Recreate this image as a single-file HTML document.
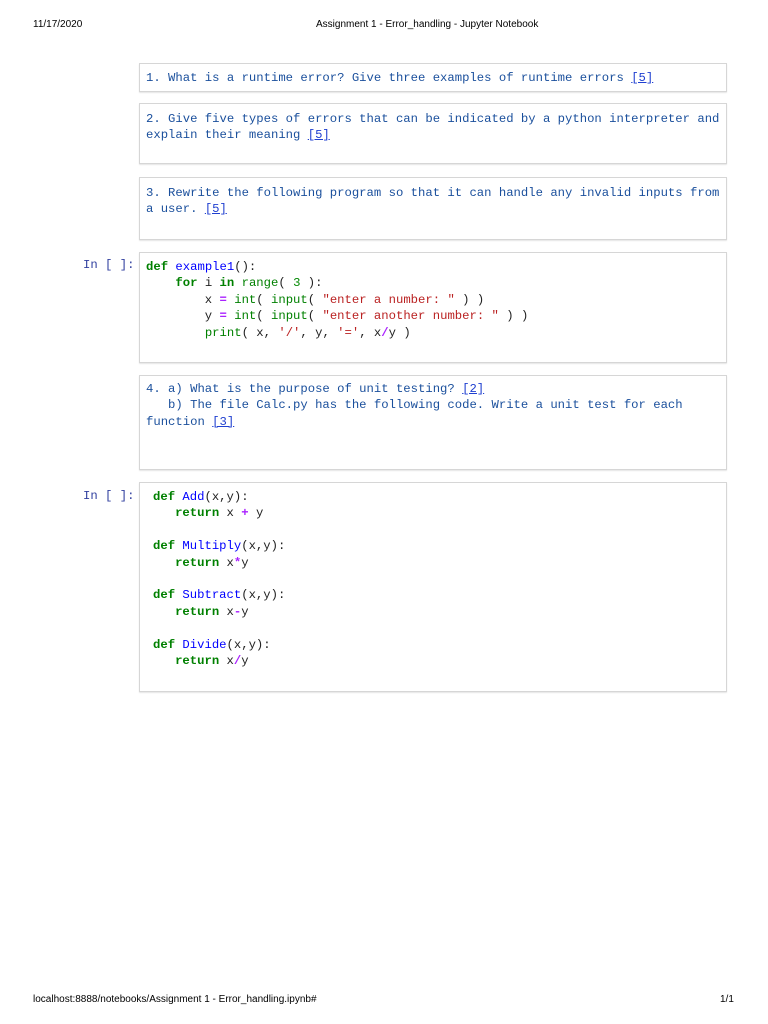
<!DOCTYPE html>
<html><head><meta charset="utf-8"><style>
body{margin:0;width:768px;height:1024px;background:#fff;position:relative;font-family:"Liberation Sans",sans-serif;}
.hdr{position:absolute;font-size:10px;color:#000;}
.box{position:absolute;left:139px;width:586px;border:1px solid #d6d6d6;box-shadow:0 1px 1px #e6e6e6;background:#fff;}
pre{margin:0;position:absolute;left:6px;font-family:"Liberation Mono",monospace;font-size:12.25px;line-height:16.4px;color:#1a4f9c;white-space:pre;}
.code pre{color:#222;}
a{color:#1f3fd0;text-decoration:underline;}
.k{color:#008000;font-weight:bold}.f{color:#0000ff}.b{color:#008000}.s{color:#ba2121}.o{color:#aa22ff;font-weight:bold}.n{color:#080}
.p{position:absolute;left:83px;font-family:"Liberation Mono",monospace;font-size:12.25px;color:#303f9f;}
</style></head><body>
<div class="hdr" style="left:33px;top:19px">11/17/2020</div>
<div class="hdr" style="left:316px;top:19px">Assignment 1 - Error_handling - Jupyter Notebook</div>
<div class="box" style="top:63px;height:27px"><pre style="top:6px">1. What is a runtime error? Give three examples of runtime errors <a>[5]</a></pre></div>
<div class="box" style="top:103px;height:59px"><pre style="top:7px">2. Give five types of errors that can be indicated by a python interpreter and
explain their meaning <a>[5]</a></pre></div>
<div class="box" style="top:177px;height:61px"><pre style="top:7px">3. Rewrite the following program so that it can handle any invalid inputs from
a user. <a>[5]</a></pre></div>
<div class="p" style="top:258px">In [ ]:</div>
<div class="box code" style="top:252px;height:109px"><pre style="top:6px"><span class="k">def</span> <span class="f">example1</span>():
    <span class="k">for</span> i <span class="k">in</span> <span class="b">range</span>( <span class="n">3</span> ):
        x <span class="o">=</span> <span class="b">int</span>( <span class="b">input</span>( <span class="s">"enter a number: "</span> ) )
        y <span class="o">=</span> <span class="b">int</span>( <span class="b">input</span>( <span class="s">"enter another number: "</span> ) )
        <span class="b">print</span>( x, <span class="s">'/'</span>, y, <span class="s">'='</span>, x<span class="o">/</span>y )</pre></div>
<div class="box" style="top:375px;height:93px"><pre style="top:5px">4. a) What is the purpose of unit testing? <a>[2]</a>
   b) The file Calc.py has the following code. Write a unit test for each
function <a>[3]</a></pre></div>
<div class="p" style="top:489px">In [ ]:</div>
<div class="box code" style="top:482px;height:208px"><pre style="top:6px;left:13px"><span class="k">def</span> <span class="f">Add</span>(x,y):
   <span class="k">return</span> x <span class="o">+</span> y

<span class="k">def</span> <span class="f">Multiply</span>(x,y):
   <span class="k">return</span> x<span class="o">*</span>y

<span class="k">def</span> <span class="f">Subtract</span>(x,y):
   <span class="k">return</span> x<span class="o">-</span>y

<span class="k">def</span> <span class="f">Divide</span>(x,y):
   <span class="k">return</span> x<span class="o">/</span>y</pre></div>
<div class="hdr" style="left:33px;top:994px">localhost:8888/notebooks/Assignment 1 - Error_handling.ipynb#</div>
<div class="hdr" style="left:720px;top:994px">1/1</div>
</body></html>
